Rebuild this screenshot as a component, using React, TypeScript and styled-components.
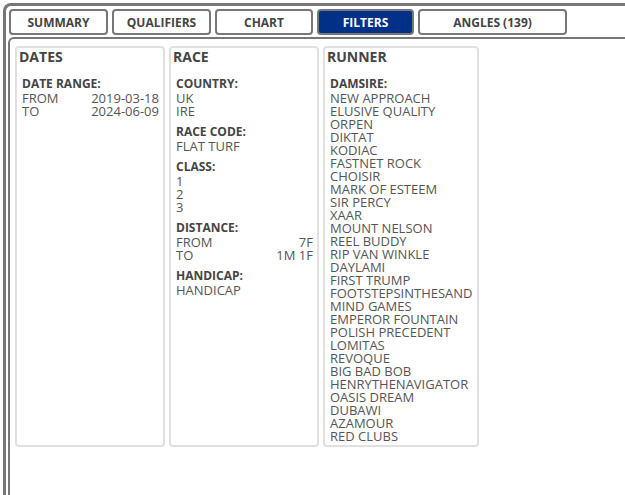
import React from 'react';
import styled, { createGlobalStyle } from 'styled-components';

const GlobalStyle = createGlobalStyle`
  html, body {
    margin: 0;
    padding: 0;
    overflow: hidden;
    background: #fff;
  }
  body {
    font-family: "Open Sans", "Liberation Sans", Arial, sans-serif;
    color: #444;
  }
`;

const Frame = styled.div`
  margin: 3px 0 0 3px;
  width: 680px;
  height: 540px;
  border-top: 3px solid #777;
  border-left: 3px solid #777;
  border-top-left-radius: 8px;
  box-sizing: border-box;
  display: flex;
  flex-direction: column;
`;

const TabBar = styled.div`
  display: flex;
  gap: 4px;
  padding: 3px 0 0 3px;
`;

const Tab = styled.div<{ $active?: boolean; $width: number }>`
  width: ${p => p.$width}px;
  height: 26px;
  box-sizing: border-box;
  border: 2px solid #777;
  border-radius: 4px;
  background: ${p => (p.$active ? '#003087' : '#fff')};
  color: ${p => (p.$active ? '#fff' : '#444')};
  font-size: 12px;
  font-weight: 700;
  display: flex;
  align-items: center;
  justify-content: center;
`;

const Panel = styled.div`
  flex: 1;
  margin: 2px 0 0 2px;
  border-top: 2px solid #777;
  border-left: 2px solid #777;
  border-top-left-radius: 6px;
  padding: 7px 0 0 5px;
  display: flex;
  align-items: flex-start;
`;

const Cards = styled.div`
  display: flex;
  gap: 4px;
  align-items: stretch;
`;

const Card = styled.div`
  min-width: 150px;
  box-sizing: border-box;
  border: 2px solid #e0e0e0;
  border-radius: 4px;
  padding: 0 4px 2px 2px;
`;

const CardTitle = styled.div`
  font-size: 14px;
  font-weight: 700;
  line-height: 18px;
  color: #444;
  margin-bottom: 10px;
`;

const Section = styled.div`
  padding-left: 3px;
  margin-top: 6px;
`;

const Label = styled.div`
  font-size: 12px;
  font-weight: 700;
  line-height: 16px;
  color: #444;
`;

const Value = styled.div`
  font-size: 13px;
  line-height: 13px;
  color: #555;
  white-space: nowrap;
`;

const Pair = styled.div`
  display: flex;
  justify-content: space-between;
  font-size: 13px;
  line-height: 13px;
  color: #555;
`;

const tabs = [
  { name: 'SUMMARY', width: 99 },
  { name: 'QUALIFIERS', width: 99 },
  { name: 'CHART', width: 98 },
  { name: 'FILTERS', width: 97 },
  { name: 'ANGLES (139)', width: 149 },
];

const damsires = [
  'NEW APPROACH', 'ELUSIVE QUALITY', 'ORPEN', 'DIKTAT', 'KODIAC', 'FASTNET ROCK',
  'CHOISIR', 'MARK OF ESTEEM', 'SIR PERCY', 'XAAR', 'MOUNT NELSON', 'REEL BUDDY',
  'RIP VAN WINKLE', 'DAYLAMI', 'FIRST TRUMP', 'FOOTSTEPSINTHESAND', 'MIND GAMES',
  'EMPEROR FOUNTAIN', 'POLISH PRECEDENT', 'LOMITAS', 'REVOQUE', 'BIG BAD BOB',
  'HENRYTHENAVIGATOR', 'OASIS DREAM', 'DUBAWI', 'AZAMOUR', 'RED CLUBS',
];

const App: React.FC = () => {
  return (
    <>
      <GlobalStyle />
      <Frame>
        <TabBar>
          {tabs.map(t => (
            <Tab key={t.name} $active={t.name === 'FILTERS'} $width={t.width}>
              {t.name}
            </Tab>
          ))}
        </TabBar>
        <Panel>
          <Cards>
            <Card>
              <CardTitle>DATES</CardTitle>
              <Section>
                <Label>DATE RANGE:</Label>
                <Pair><span>FROM</span><span>2019-03-18</span></Pair>
                <Pair><span>TO</span><span>2024-06-09</span></Pair>
              </Section>
            </Card>
            <Card>
              <CardTitle>RACE</CardTitle>
              <Section>
                <Label>COUNTRY:</Label>
                <Value>UK</Value>
                <Value>IRE</Value>
              </Section>
              <Section>
                <Label>RACE CODE:</Label>
                <Value>FLAT TURF</Value>
              </Section>
              <Section>
                <Label>CLASS:</Label>
                <Value>1</Value>
                <Value>2</Value>
                <Value>3</Value>
              </Section>
              <Section>
                <Label>DISTANCE:</Label>
                <Pair><span>FROM</span><span>7F</span></Pair>
                <Pair><span>TO</span><span>1M 1F</span></Pair>
              </Section>
              <Section>
                <Label>HANDICAP:</Label>
                <Value>HANDICAP</Value>
              </Section>
            </Card>
            <Card>
              <CardTitle>RUNNER</CardTitle>
              <Section>
                <Label>DAMSIRE:</Label>
                {damsires.map(d => (
                  <Value key={d}>{d}</Value>
                ))}
              </Section>
            </Card>
          </Cards>
        </Panel>
      </Frame>
    </>
  );
};

export default App;
